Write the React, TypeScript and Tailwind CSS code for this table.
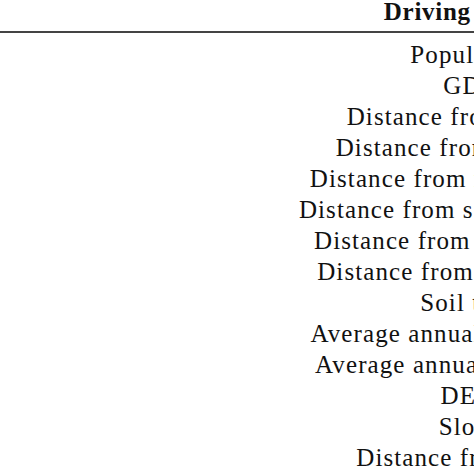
const rows = [
  "Population",
  "GDP",
  "Distance from railway",
  "Distance from highways",
  "Distance from national roads",
  "Distance from secondary roads",
  "Distance from tertiary roads",
  "Distance from county roads",
  "Soil type",
  "Average annual precipitation",
  "Average annual temperature",
  "DEM",
  "Slope",
  "Distance from rivers",
]

export default function App() {
  return (
    <div className="w-[474px] h-[474px] overflow-hidden bg-white text-[#111] font-['Liberation_Serif',serif]">
      <div className="w-[940px]">
        <div className="text-center text-[25px] leading-[24px] tracking-[0.7px] font-bold">Driving factors</div>
        <div className="mt-[7px] h-[2px] bg-[#444]" />
        <div className="mt-[6px]">
          {rows.map((r) => (
            <div key={r} className="text-center text-[25px] leading-[31px] tracking-[1.1px] whitespace-nowrap">
              {r}
            </div>
          ))}
        </div>
      </div>
    </div>
  )
}
